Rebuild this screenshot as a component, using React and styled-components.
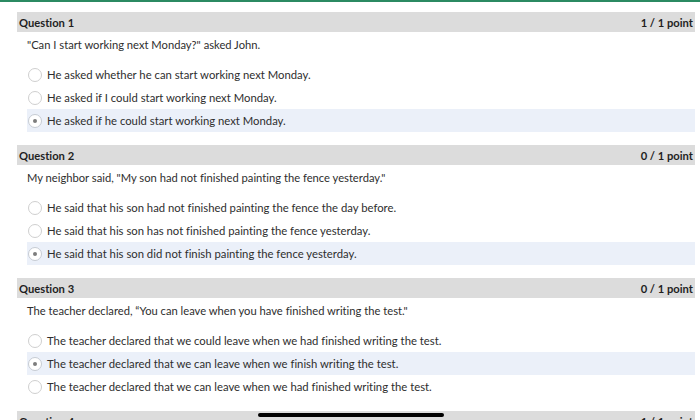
import React from "react";
import styled, { createGlobalStyle } from "styled-components";

const GlobalStyle = createGlobalStyle`
    body {
        margin: 0;
        background: #ffffff;
        font-family: Lato, "Open Sans", sans-serif;
        color: #2e2e2e;
        overflow: hidden;
        font-variant-ligatures: none;
    }
`;

const TopLine = styled.div`
    height: 2px;
    background-color: #2b8a62;
`;

const List = styled.div`
    padding: 10px 5px 0 17px;
`;

const Section = styled.section`
    padding-bottom: 13px;
`;

const Header = styled.div`
    height: 20px;
    display: flex;
    align-items: center;
    justify-content: space-between;
    padding: 0 2px 0 2px;
    background-color: #dcdcdc;
    font-size: 11.2px;
    font-weight: 700;
    color: #1f1f1f;
`;

const Prompt = styled.div`
    margin-top: 6px;
    padding-left: 10px;
    font-size: 11.2px;
    line-height: 13px;
`;

const Options = styled.div`
    margin-top: 12px;
    margin-left: 10px;
`;

const Option = styled.label`
    height: 23px;
    display: flex;
    align-items: center;
    gap: 5px;
    padding-left: 1px;
    font-size: 11.3px;
    background-color: ${(p) => (p.selected ? "#ebf0f9" : "transparent")};
`;

const Radio = styled.span`
    width: 12px;
    height: 12px;
    border-radius: 50%;
    border: 1px solid ${(p) => (p.selected ? "#c6cbd3" : "#cfcfcf")};
    background: #ffffff;
    display: flex;
    align-items: center;
    justify-content: center;
    flex-shrink: 0;
    &::after {
        content: "";
        width: 4px;
        height: 4px;
        border-radius: 50%;
        background: ${(p) => (p.selected ? "#7d7d7d" : "transparent")};
    }
`;

const HomeIndicator = styled.div`
    position: fixed;
    left: 258px;
    bottom: 3px;
    width: 186px;
    height: 4px;
    border-radius: 2px;
    background-color: #000000;
`;

const questions = [
    {
        title: "Question 1",
        score: "1 / 1 point",
        prompt: "\"Can I start working next Monday?\" asked John.",
        options: [
            "He asked whether he can start working next Monday.",
            "He asked if I could start working next Monday.",
            "He asked if he could start working next Monday."
        ],
        selected: 2
    },
    {
        title: "Question 2",
        score: "0 / 1 point",
        prompt: "My neighbor said, \"My son had not finished painting the fence yesterday.\"",
        options: [
            "He said that his son had not finished painting the fence the day before.",
            "He said that his son has not finished painting the fence yesterday.",
            "He said that his son did not finish painting the fence yesterday."
        ],
        selected: 2
    },
    {
        title: "Question 3",
        score: "0 / 1 point",
        prompt: "The teacher declared, \u201cYou can leave when you have finished writing the test.\"",
        options: [
            "The teacher declared that we could leave when we had finished writing the test.",
            "The teacher declared that we can leave when we finish writing the test.",
            "The teacher declared that we can leave when we had finished writing the test."
        ],
        selected: 1
    },
    {
        title: "Question 4",
        score: "1 / 1 point",
        prompt: "",
        options: [],
        selected: -1
    }
];

export default function App() {
    return (
        <>
            <GlobalStyle />
            <TopLine />
            <List>
                {questions.map((q) => (
                    <Section key={q.title}>
                        <Header>
                            <span>{q.title}</span>
                            <span>{q.score}</span>
                        </Header>
                        <Prompt>{q.prompt}</Prompt>
                        <Options>
                            {q.options.map((text, i) => (
                                <Option key={text} selected={i === q.selected}>
                                    <Radio selected={i === q.selected} />
                                    <span>{text}</span>
                                </Option>
                            ))}
                        </Options>
                    </Section>
                ))}
            </List>
            <HomeIndicator />
        </>
    );
}
